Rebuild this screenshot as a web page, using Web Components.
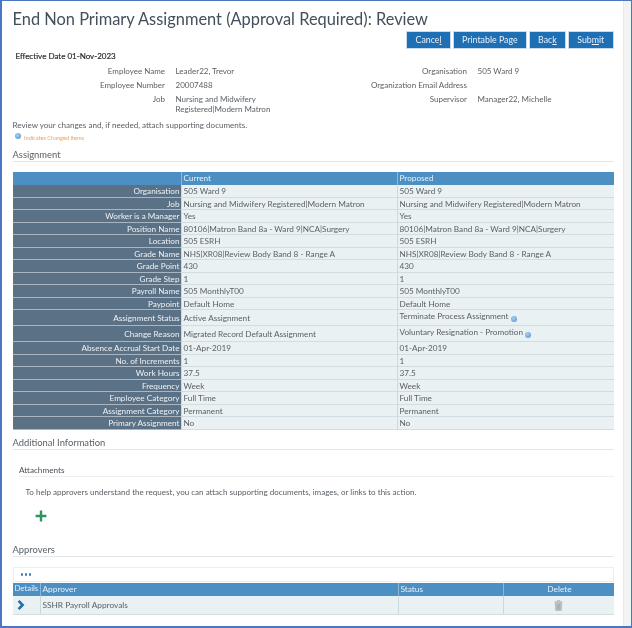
<!DOCTYPE html>
<html>
<head>
<meta charset="utf-8">
<title>End Non Primary Assignment: Review</title>
<style>
  html, body { margin: 0; padding: 0; background: #fff; }
  body { font-family: Lato, "Open Sans", sans-serif; color: #5b6166; }
</style>
</head>
<body>
<review-page>
  <page-title slot="head">End Non Primary Assignment (Approval Required): Review</page-title>
  <action-bar slot="head">
    <action-button>Cance<u>l</u></action-button>
    <action-button>Printable Page</action-button>
    <action-button>Bac<u>k</u></action-button>
    <action-button>Sub<u>m</u>it</action-button>
  </action-bar>
  <employee-summary></employee-summary>
  <section-head style="margin-top:6px">Assignment</section-head>
  <assignment-table></assignment-table>
  <section-head style="margin-top:6px">Additional Information</section-head>
  <attachment-box></attachment-box>
  <section-head style="margin-top:21px">Approvers</section-head>
  <approver-table></approver-table>
</review-page>

<script>
class ReviewPage extends HTMLElement {
  connectedCallback() {
    this.attachShadow({ mode: 'open' });
    this.shadowRoot.innerHTML = `
      <style>
        :host {
          display: flex;
          width: 632px;
          height: 628px;
          box-sizing: border-box;
          border: solid #4a76c2;
          border-width: 1px 1px 2px 2px;
          overflow: hidden;
        }
        main {
          flex: 1;
          box-sizing: border-box;
          padding: 0 9.5px 0 10.5px;
          min-width: 0;
          filter: blur(.3px);
        }
        .rail {
          width: 8px;
          background: #f2f3f3;
          border-left: 1px solid #e8e9ea;
          box-sizing: border-box;
        }
      </style>
      <main>
        <slot name="head"></slot>
        <slot></slot>
      </main>
      <div class="rail"></div>
    `;
  }
}
customElements.define('review-page', ReviewPage);

class PageTitle extends HTMLElement {
  connectedCallback() {
    this.attachShadow({ mode: 'open' });
    this.shadowRoot.innerHTML = `
      <style>
        :host {
          display: block;
          height: 30px;
          padding-top: 7px;
          box-sizing: border-box;
          font-size: 16.4px;
          line-height: 22px;
          color: #434f5a;
          white-space: nowrap;
        }
      </style>
      <slot></slot>
    `;
  }
}
customElements.define('page-title', PageTitle);

class ActionBar extends HTMLElement {
  connectedCallback() {
    this.attachShadow({ mode: 'open' });
    this.shadowRoot.innerHTML = `
      <style>
        :host {
          display: flex;
          justify-content: flex-end;
          gap: 2px;
          height: 18px;
        }
      </style>
      <slot></slot>
    `;
  }
}
customElements.define('action-bar', ActionBar);

class ActionButton extends HTMLElement {
  connectedCallback() {
    this.attachShadow({ mode: 'open' });
    this.shadowRoot.innerHTML = `
      <style>
        :host {
          display: block;
          box-sizing: border-box;
          height: 18px;
          padding: 0 8.25px;
          background: #1f6fb5;
          border: 1px solid #c9dcec;
          color: #e8f1f8;
          font-size: 8.8px;
          line-height: 16px;
          white-space: nowrap;
        }
      </style>
      <slot></slot>
    `;
  }
}
customElements.define('action-button', ActionButton);

class EmployeeSummary extends HTMLElement {
  connectedCallback() {
    this.attachShadow({ mode: 'open' });
    this.shadowRoot.innerHTML = `
      <style>
        :host {
          display: block;
          font-size: 8px;
          color: #5b6166;
        }
        .date {
          padding: 2px 0 0 3px;
          height: 12px;
          box-sizing: border-box;
          line-height: 10px;
          color: #2f2f2f;
          -webkit-text-stroke: 0.2px #2f2f2f;
        }
        .fields {
          display: grid;
          grid-template-columns: 152.5px 162px 140px 120px;
          grid-auto-rows: 14px;
          margin-top: 3px;
          line-height: 14px;
        }
        .k { text-align: right; white-space: nowrap; }
        .v { padding-left: 10.5px; white-space: nowrap; }
        .job { line-height: 9.5px; padding-top: 3px; height: 22px; box-sizing: border-box; }
        .note { margin-top: 13px; height: 12px; line-height: 12px; font-size: 8.05px; }
        .legend {
          display: flex;
          align-items: center;
          gap: 3.5px;
          height: 9px;
          margin-top: 2px;
          padding-left: 2px;
          font-size: 5.6px;
          color: #e8a35c;
        }
        .dot {
          width: 6px;
          height: 6px;
          margin-top: -3px;
          border-radius: 50%;
          background: radial-gradient(circle at 40% 35%, #a8d0ee, #4a90cf);
        }
      </style>
      <div class="date">Effective Date 01-Nov-2023</div>
      <div class="fields">
        <div class="k">Employee Name</div><div class="v">Leader22, Trevor</div>
        <div class="k">Organisation</div><div class="v">505 Ward 9</div>
        <div class="k">Employee Number</div><div class="v">20007488</div>
        <div class="k">Organization Email Address</div><div class="v"></div>
        <div class="k">Job</div><div class="v job">Nursing and Midwifery<br>Registered|Modern Matron</div>
        <div class="k">Supervisor</div><div class="v">Manager22, Michelle</div>
      </div>
      <div class="note">Review your changes and, if needed, attach supporting documents.</div>
      <div class="legend"><span class="dot"></span>Indicates Changed Items</div>
    `;
  }
}
customElements.define('employee-summary', EmployeeSummary);

class SectionHead extends HTMLElement {
  connectedCallback() {
    this.attachShadow({ mode: 'open' });
    this.shadowRoot.innerHTML = `
      <style>
        :host {
          display: block;
          height: 13px;
          border-bottom: 1px solid #e3e6e8;
          font-size: 9.4px;
          line-height: 14px;
          color: #59626a;
        }
      </style>
      <slot></slot>
    `;
  }
}
customElements.define('section-head', SectionHead);

class AssignmentTable extends HTMLElement {
  connectedCallback() {
    const same = [
      ['Organisation', '505 Ward 9'],
      ['Job', 'Nursing and Midwifery Registered|Modern Matron'],
      ['Worker is a Manager', 'Yes'],
      ['Position Name', '80106|Matron Band 8a - Ward 9|NCA|Surgery'],
      ['Location', '505 ESRH'],
      ['Grade Name', 'NHS|XR08|Review Body Band 8 - Range A'],
      ['Grade Point', '430'],
      ['Grade Step', '1'],
      ['Payroll Name', '505 MonthlyT00'],
      ['Paypoint', 'Default Home'],
    ];
    const after = [
      ['Absence Accrual Start Date', '01-Apr-2019'],
      ['No. of Increments', '1'],
      ['Work Hours', '37.5'],
      ['Frequency', 'Week'],
      ['Employee Category', 'Full Time'],
      ['Assignment Category', 'Permanent'],
      ['Primary Assignment', 'No'],
    ];
    const row = (k, a, b, cls) => `
      <div class="row ${cls}"><div class="k">${k}</div><div class="c">${a}</div><div class="c">${b}</div></div>`;
    const rows = list => list.map((r, i) => row(r[0], r[1], r[1], i % 2 ? 'even' : 'odd')).join('');
    const mark = '<span class="mark"></span>';
    this.attachShadow({ mode: 'open' });
    this.shadowRoot.innerHTML = `
      <style>
        :host {
          display: block;
          margin-top: 10px;
          width: 601px;
          font-size: 8.2px;
          color: #5b6166;
        }
        .row {
          display: grid;
          grid-template-columns: 168px 216px 217px;
          box-sizing: border-box;
          white-space: nowrap;
        }
        .odd { height: 13px; line-height: 13px; }
        .even { height: 12px; line-height: 12px; }
        .tall { height: 16px; line-height: 17px; }
        .k {
          background: #5a7186;
          color: #eef2f5;
          text-align: right;
          padding-right: 1px;
          border-bottom: 1px solid #a9b6c1;
        }
        .c {
          background: #e9f1f3;
          padding-left: 2px;
          border-left: 1px solid #cdd8dd;
          border-bottom: 1px solid #d3dde1;
        }
        .row > div { box-sizing: border-box; overflow: hidden; }
        .tall .c:last-child { line-height: 13px; }
        .head div {
          background: #4c8fc3;
          color: #e8f1f8;
          padding-left: 2px;
          border-left: 1px solid #8db7d8;
          border-bottom: 0;
        }
        .head div:first-child { border-left: 0; }
        .mark {
          display: inline-block;
          width: 6px;
          height: 6px;
          margin-left: 2px;
          vertical-align: -3px;
          border-radius: 50%;
          background: radial-gradient(circle at 40% 35%, #a8d0ee, #4a90cf);
        }
      </style>
      <div class="row head odd"><div></div><div>Current</div><div>Proposed</div></div>
      ${rows(same)}
      ${row('Assignment Status', 'Active Assignment', 'Terminate Process Assignment' + mark, 'tall')}
      ${row('Change Reason', 'Migrated Record Default Assignment', 'Voluntary Resignation - Promotion' + mark, 'tall')}
      ${rows(after)}
    `;
  }
}
customElements.define('assignment-table', AssignmentTable);

class AttachmentBox extends HTMLElement {
  connectedCallback() {
    this.attachShadow({ mode: 'open' });
    this.shadowRoot.innerHTML = `
      <style>
        :host {
          display: block;
          padding: 14px 0 0 6.5px;
          color: #5b6166;
        }
        h3 {
          margin: 0;
          height: 12px;
          line-height: 12px;
          font-size: 8.2px;
          font-weight: 400;
          color: #4a4f54;
          border-bottom: 1px solid #eceef0;
        }
        p {
          margin: 9px 0 0 6.5px;
          font-size: 8.06px;
          line-height: 12px;
        }
        svg { display: block; margin: 12px 0 0 15.5px; }
      </style>
      <h3>Attachments</h3>
      <p>To help approvers understand the request, you can attach supporting documents, images, or links to this action.</p>
      <svg width="12" height="12" viewBox="0 0 12 12"><path d="M6 .6v10.8M.6 6h10.8" stroke="#2f9560" stroke-width="2.4"/></svg>
    `;
  }
}
customElements.define('attachment-box', AttachmentBox);

class ApproverTable extends HTMLElement {
  connectedCallback() {
    this.attachShadow({ mode: 'open' });
    this.shadowRoot.innerHTML = `
      <style>
        :host {
          display: block;
          margin-top: 10px;
          width: 601px;
          font-size: 8.3px;
          color: #5b6166;
        }
        .tools {
          display: flex;
          align-items: center;
          gap: 1.5px;
          height: 15px;
          box-sizing: border-box;
          padding-left: 7px;
          border: 1px solid #eceef0;
        }
        .tools i { width: 2.5px; height: 2.5px; border-radius: 50%; background: #3f7fb5; }
        .row {
          display: grid;
          grid-template-columns: 27px 358px 105px 111px;
        }
        .head {
          height: 13px;
          margin-top: 1px;
          background: #4c8fc3;
          color: #e8f1f8;
          line-height: 13px;
        }
        .head div { border-left: 1px solid #8db7d8; padding-left: 2px; }
        .head div:first-child { border-left: 0; font-size: 7.8px; line-height: 11px; }
        .head .del { text-align: center; }
        .body {
          height: 19px;
          background: #e9f1f3;
          border-bottom: 1px solid #d3dde1;
          box-sizing: border-box;
          line-height: 17px;
        }
        .body div { border-left: 1px solid #cdd8dd; padding-left: 2px; display: flex; align-items: center; }
        .body div:first-child { border-left: 0; padding-left: 4px; }
        .body .del { justify-content: center; padding-left: 0; }
        .body .name { padding-top: 1px; box-sizing: border-box; }
      </style>
      <div class="tools"><i></i><i></i><i></i></div>
      <div class="row head"><div>Details</div><div>Approver</div><div>Status</div><div class="del">Delete</div></div>
      <div class="row body">
        <div><svg width="8" height="10" viewBox="0 0 8 10"><path d="M1.6 .9l4 4.1-4 4.1" fill="none" stroke="#1f6fb5" stroke-width="2.6"/></svg></div>
        <div class="name">SSHR Payroll Approvals</div>
        <div></div>
        <div class="del"><svg width="9" height="11" viewBox="0 0 9 11"><path d="M.5 2h8M3 2V.8h3V2" fill="none" stroke="#a9adb0" stroke-width=".9"/><path d="M1.2 3h6.6l-.5 7.5H1.7z" fill="#c3c6c8" stroke="#a9adb0" stroke-width=".6"/><path d="M3.2 4v5.5M4.5 4v5.5M5.8 4v5.5" stroke="#8f9396" stroke-width=".5"/></svg></div>
      </div>
    `;
  }
}
customElements.define('approver-table', ApproverTable);
</script>
</body>
</html>
